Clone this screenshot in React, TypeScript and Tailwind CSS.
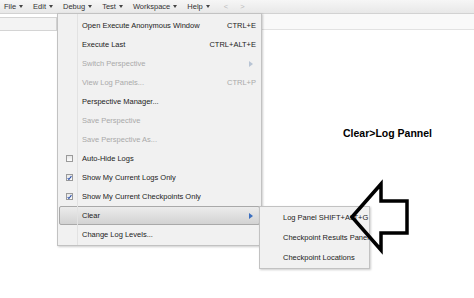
import React from "react";

type Item = {
  label: string;
  shortcut?: string;
  disabled?: boolean;
  sub?: boolean;
  check?: "on" | "off";
  active?: boolean;
};

const barItems = ["File", "Edit", "Debug", "Test", "Workspace", "Help"];

const debugItems: Item[] = [
  { label: "Open Execute Anonymous Window", shortcut: "CTRL+E" },
  { label: "Execute Last", shortcut: "CTRL+ALT+E" },
  { label: "Switch Perspective", disabled: true, sub: true },
  { label: "View Log Panels...", shortcut: "CTRL+P", disabled: true },
  { label: "Perspective Manager..." },
  { label: "Save Perspective", disabled: true },
  { label: "Save Perspective As...", disabled: true },
  { label: "Auto-Hide Logs", check: "off" },
  { label: "Show My Current Logs Only", check: "on" },
  { label: "Show My Current Checkpoints Only", check: "on" },
  { label: "Clear", sub: true, active: true },
  { label: "Change Log Levels..." },
];

const clearItems = ["Log Panel SHIFT+ALT+G", "Checkpoint Results Panel", "Checkpoint Locations"];

function Caret() {
  return <span className="ml-[3px] inline-block h-0 w-0 border-x-[2px] border-t-[3px] border-x-transparent border-t-[#444] align-middle" />;
}

function SubArrow({ disabled }: { disabled?: boolean }) {
  return (
    <span
      className={
        "inline-block h-0 w-0 border-y-[3px] border-l-[4px] border-y-transparent " +
        (disabled ? "border-l-[#b8c4d4]" : "border-l-[#3b6fc0]")
      }
    />
  );
}

function CheckBox({ on }: { on: boolean }) {
  return (
    <span className="flex h-[7px] w-[7px] items-center justify-center border border-[#9a9a9a] bg-gradient-to-b from-[#e6e6e6] to-[#fdfdfd]">
      {on && (
        <svg width="6" height="6" viewBox="0 0 6 6">
          <path d="M0.8 3.1 L2.3 4.8 L5.3 0.8" fill="none" stroke="#2a4fa8" strokeWidth="1.3" />
        </svg>
      )}
    </span>
  );
}

function MenuRow({ item }: { item: Item }) {
  return (
    <div
      className={
        "mx-[1px] flex h-[19px] items-center rounded-[2px] " +
        (item.active ? "border border-[#a9a9a9] bg-gradient-to-b from-[#ececec] to-[#d2d2d2]" : "border border-transparent")
      }
    >
      <div className="flex w-[18px] justify-center">{item.check && <CheckBox on={item.check === "on"} />}</div>
      <div className={"ml-[4px] flex-1 " + (item.disabled ? "text-[#a9a9a9]" : "text-[#222]")}>{item.label}</div>
      {item.shortcut && <div className={"mr-[3px] " + (item.disabled ? "text-[#a9a9a9]" : "text-[#222]")}>{item.shortcut}</div>}
      {item.sub && (
        <div className="mr-[6px] flex items-center">
          <SubArrow disabled={item.disabled} />
        </div>
      )}
    </div>
  );
}

export default function App() {
  return (
    <div className="relative h-[298px] w-[474px] overflow-hidden bg-white text-[7.5px] font-['Liberation_Sans',Arial,sans-serif] text-[#222]">
      {/* menu bar */}
      <div className="flex h-[14px] items-center gap-[10px] border-b border-[#d2d2d2] bg-gradient-to-b from-[#f6f6f6] to-[#e8e8e8] pl-[4px]">
        {barItems.map((b) => (
          <div key={b} className="flex items-center text-[#333]">
            {b}
            <Caret />
          </div>
        ))}
        <div className="ml-[4px] text-[#bbb]">&lt;</div>
        <div className="ml-[2px] text-[#bbb]">&gt;</div>
      </div>
      {/* toolbar strip */}
      <div className="flex h-[17px]">
        <div className="mt-[3px] h-[14px] w-[57px] border-y border-r border-[#d4d4d4] bg-[#f3f3f3]" />
        <div className="h-[16px] flex-1 border-b border-[#e2e2e2] bg-[#f9f9f9]" />
      </div>

      {/* debug dropdown */}
      <div className="absolute left-[57px] top-[13px] w-[205px] border border-[#c2c2c2] bg-[#f1f1f1] pt-[2px] pb-[1px] shadow-[1px_1px_2px_rgba(0,0,0,0.2)]">
        <div className="absolute bottom-0 left-[19px] top-0 w-px bg-[#e2e2e2]" />
        {debugItems.map((it) => (
          <MenuRow key={it.label} item={it} />
        ))}
      </div>

      {/* clear submenu */}
      <div className="absolute left-[259px] top-[206px] w-[111px] border border-[#c2c2c2] bg-[#f1f1f1] pt-[1px] shadow-[1px_1px_2px_rgba(0,0,0,0.2)]">
        {clearItems.map((c) => (
          <div key={c} className="flex h-[20px] items-center pl-[23px]">
            {c}
          </div>
        ))}
      </div>

      {/* annotation */}
      <div className="absolute left-[343px] top-[126px] text-[10.5px] font-bold text-black">Clear&gt;Log Pannel</div>
      <svg className="absolute left-0 top-0" width="474" height="298">
        <polygon
          points="352,217 381,184 381,201 407,201 407,233 381,233 381,250"
          fill="none"
          stroke="#000"
          strokeWidth="3.5"
          strokeLinejoin="miter"
        />
      </svg>
    </div>
  );
}
